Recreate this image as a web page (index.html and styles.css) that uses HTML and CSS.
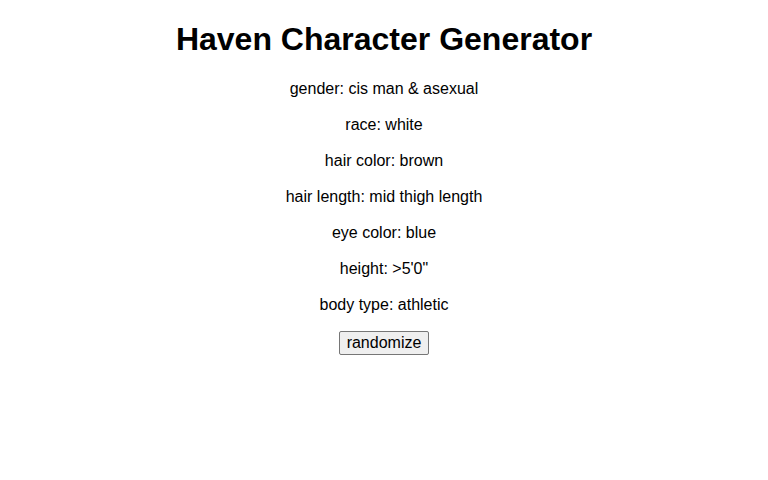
FILE: index.html
```html
<!DOCTYPE html>
<html>
<head>
<meta charset="utf-8">
<link rel="stylesheet" href="styles.css">
</head>
<body>
<main class="app">
  <h1 class="title">Haven Character Generator</h1>
  <p class="trait">gender: cis man &amp; asexual</p>
  <p class="trait">race: white</p>
  <p class="trait">hair color: brown</p>
  <p class="trait">hair length: mid thigh length</p>
  <p class="trait">eye color: blue</p>
  <p class="trait">height: &gt;5'0"</p>
  <p class="trait">body type: athletic</p>
  <button class="btn" type="button">randomize</button>
</main>
</body>
</html>
```
FILE: styles.css
```css
html, body {
  background: #fff;
}
body {
  margin: 0 8px;
  font-family: "Liberation Sans", Arial, sans-serif;
  color: #000;
}
.app {
  text-align: center;
  padding-top: 1px;
}
.title {
  font-size: 32px;
  font-weight: bold;
  margin: 20px 0 21px;
}
.trait {
  font-size: 16px;
  margin: 16px 0;
  line-height: 20px;
}
.btn {
  font-family: "Liberation Sans", Arial, sans-serif;
  font-size: 16px;
  padding: 2px 7px;
  background: #efefef;
  border: 1px solid #767676;
  border-radius: 2px;
  color: #000;
}
```
